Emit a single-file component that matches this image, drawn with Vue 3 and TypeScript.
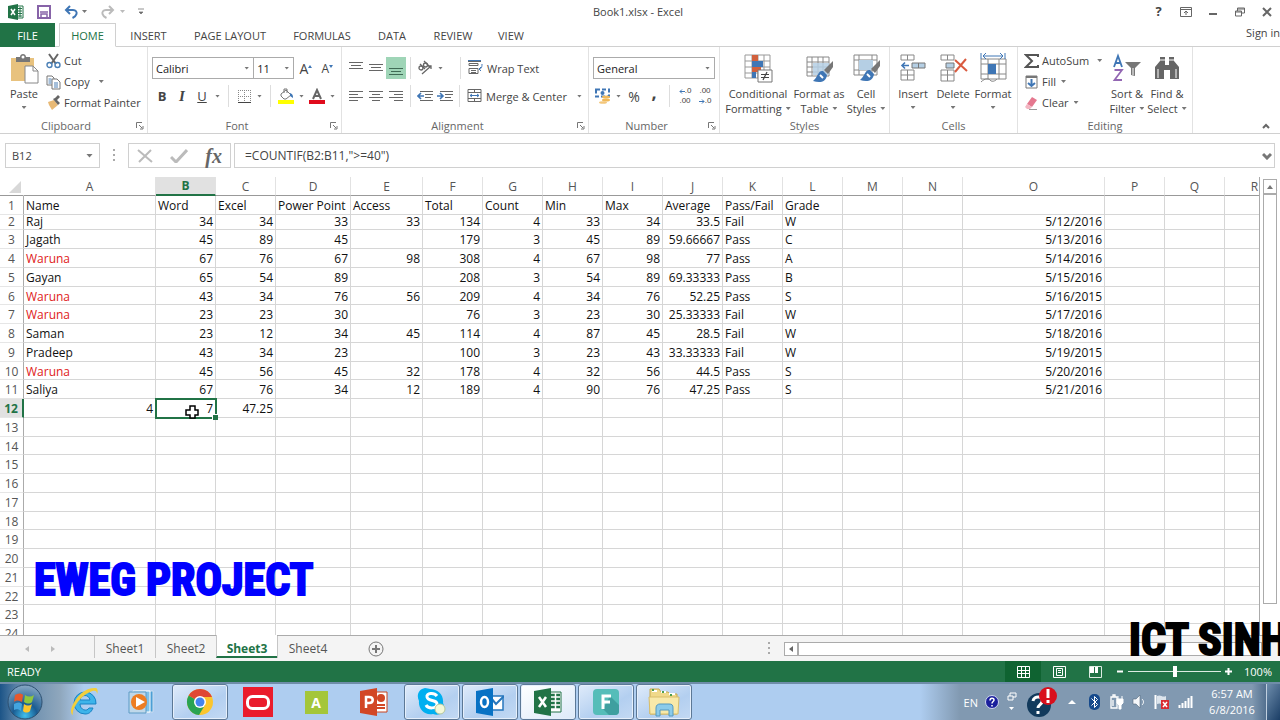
<script setup lang="ts">
import { ref } from 'vue'

type Row = string[]

const columns: string[] = 'ABCDEFGHIJKLMNOPQR'.split('')

const data: Row[] = [
  ['Name', 'Word', 'Excel', 'Power Point', 'Access', 'Total', 'Count', 'Min', 'Max', 'Average', 'Pass/Fail', 'Grade'],
  ['Raj', '34', '34', '33', '33', '134', '4', '33', '34', '33.5', 'Fail', 'W', '', '', '5/12/2016'],
  ['Jagath', '45', '89', '45', '', '179', '3', '45', '89', '59.66667', 'Pass', 'C', '', '', '5/13/2016'],
  ['Waruna', '67', '76', '67', '98', '308', '4', '67', '98', '77', 'Pass', 'A', '', '', '5/14/2016'],
  ['Gayan', '65', '54', '89', '', '208', '3', '54', '89', '69.33333', 'Pass', 'B', '', '', '5/15/2016'],
  ['Waruna', '43', '34', '76', '56', '209', '4', '34', '76', '52.25', 'Pass', 'S', '', '', '5/16/2015'],
  ['Waruna', '23', '23', '30', '', '76', '3', '23', '30', '25.33333', 'Fail', 'W', '', '', '5/17/2016'],
  ['Saman', '23', '12', '34', '45', '114', '4', '87', '45', '28.5', 'Fail', 'W', '', '', '5/18/2016'],
  ['Pradeep', '43', '34', '23', '', '100', '3', '23', '43', '33.33333', 'Fail', 'W', '', '', '5/19/2015'],
  ['Waruna', '45', '56', '45', '32', '178', '4', '32', '56', '44.5', 'Pass', 'S', '', '', '5/20/2016'],
  ['Saliya', '67', '76', '34', '12', '189', '4', '90', '76', '47.25', 'Pass', 'S', '', '', '5/21/2016'],
  ['4', '7', '47.25'],
]

const rows: Row[] = Array.from({ length: 24 }, (_, r) =>
  columns.map((_, c) => data[r]?.[c] ?? ''),
)

const isNumeric = (v: string): boolean => /^[\d./]+$/.test(v)

const ribbonTabs: string[] = ['INSERT', 'PAGE LAYOUT', 'FORMULAS', 'DATA', 'REVIEW', 'VIEW']
const sheets: string[] = ['Sheet1', 'Sheet2', 'Sheet3', 'Sheet4']
const activeSheet = ref('Sheet3')
const formula = ref('=COUNTIF(B2:B11,">=40")')
const cellName = ref('B12')
const zoom = ref(50)
</script>

<template>
  <div class="app">
    <header class="titlebar">
      <div class="quick">
        <svg width="16" height="16" viewBox="0 0 16 16"><path d="M9 2h6v12H9z" fill="#fff" stroke="#217346" /><path d="M10 4.500h4M10 7h4M10 9.500h4M10 12h4M12 3v10" stroke="#217346" /><path d="M0 2 10 0v16L0 14z" fill="#217346" /><path d="m3 5 4 6M7 5l-4 6" stroke="#fff" stroke-width="1.500" /></svg>
        <button aria-label="Save"><svg width="14" height="14" viewBox="0 0 14 14"><path d="M1 1h12v12H1z" fill="#fff" stroke="#8763a8" stroke-width="2" /><path d="M3 7h8M4 13V9h6v4" fill="none" stroke="#8763a8" stroke-width="1.500" /></svg></button>
        <button aria-label="Undo"><svg width="24" height="14" viewBox="0 0 24 14"><path d="M2 5h7c3 0 4 2 3.500 4-.5 2-2 3-4 4M6 1 2 5l4 4" fill="none" stroke="#3f76b5" stroke-width="2" /><path d="M18 5h5l-2.500 3z" fill="#777" /></svg></button>
        <button aria-label="Redo"><svg width="24" height="14" viewBox="0 0 24 14"><path d="M12 5H5C2 5 1 7 1.500 9c.5 2 2 3 4 4M8 1l4 4-4 4" fill="none" stroke="#bbb" stroke-width="2" /><path d="M19 5h5l-2.500 3z" fill="#bbb" /></svg></button>
        <button aria-label="Customize toolbar"><svg width="6" height="8" viewBox="0 0 6 8"><path d="M0 1h6M1 4h4L3 6z" fill="#666" stroke="#777" stroke-width=".8" /></svg></button>
      </div>
      <h1>Book1.xlsx - Excel</h1>
      <div class="window-buttons">
        <button class="help" aria-label="Help">?</button>
        <button aria-label="Ribbon options"><svg width="12" height="10" viewBox="0 0 12 10"><path d="M.5.500h11v9H.5zM.5 2.500h11M6 8V4M4 6l2-2 2 2" fill="none" stroke="#666" /></svg></button>
        <button aria-label="Minimize"><svg width="10" height="10" viewBox="0 0 10 10"><path d="M1 7h8" stroke="#666" stroke-width="2" /></svg></button>
        <button aria-label="Restore"><svg width="10" height="10" viewBox="0 0 10 10"><path d="M.5 4h6v5h-6zM2.500 4V1h7v5h-3M2 2h7.500M.5 5h6" fill="none" stroke="#666" /></svg></button>
        <button aria-label="Close"><svg width="10" height="10" viewBox="0 0 10 10"><path d="m1 1 8 8M9 1 1 9" stroke="#666" stroke-width="2" /></svg></button>
      </div>
    </header>

    <nav class="tabs">
      <button class="file">FILE</button>
      <button class="home">HOME</button>
      <button v-for="t in ribbonTabs" :key="t">{{ t }}</button>
      <a href="#" class="signin">Sign in</a>
    </nav>

    <section class="ribbon">
      <div class="group clipboard">
        <div class="body">
          <button class="big paste">
            <svg width="30" height="36" viewBox="0 0 30 36"><path d="M2 8h23v23H2z" fill="#e8c27e" /><path d="M7 7h4c0-4 6-4 6 0h4v5H7z" fill="#777" /><circle cx="14" cy="7" r="1.500" fill="#fff" /><path d="M16 16h8l5 5v12H16z" fill="#fff" stroke="#888" /><path d="M24 16v5h5" fill="none" stroke="#888" /></svg>
            <span>Paste</span><i class="caret" />
          </button>
          <div class="stack">
            <button><svg width="16" height="16" viewBox="0 0 16 16"><path d="m3 1 7 10M12 1 5 11" stroke="#666" stroke-width="2" /><circle cx="3.500" cy="12" r="2.500" fill="none" stroke="#4a7fb5" stroke-width="1.400" /><circle cx="11.500" cy="12" r="2.500" fill="none" stroke="#4a7fb5" stroke-width="1.400" /></svg>Cut</button>
            <button><svg width="16" height="16" viewBox="0 0 16 16"><path d="M1 2h5l2 2v7H1z" fill="#fff" stroke="#777" /><path d="M6 5h5l3 3v7H6z" fill="#fff" stroke="#777" /><path d="M2.500 5h3M2.500 7h3M2.500 9h3M8 9h4M8 11h4M8 13h4" stroke="#4a7fb5" /></svg>Copy<i class="caret far" /></button>
            <button><svg width="16" height="16" viewBox="0 0 16 16"><path d="M8 5 2 7l1 3 3 5 6-5z" fill="#e8b975" /><path d="m7 4 5 6 2-2-3-3 3-3-2-2-3 3z" fill="#666" /></svg>Format Painter</button>
          </div>
        </div>
        <footer>Clipboard<svg class="launch" width="8" height="8" viewBox="0 0 8 8"><path d="M.5 6V.5H6M3 3l3 3M7 4v3H4" fill="none" stroke="#777" /></svg></footer>
      </div>

      <div class="group font">
        <div class="lines">
          <div class="line">
            <label class="combo family"><select aria-label="Font"><option>Calibri</option></select><i class="caret" /></label>
            <label class="combo size"><select aria-label="Font size"><option>11</option></select><i class="caret" /></label>
            <button class="grow" aria-label="Increase font size">A<svg width="4" height="4" viewBox="0 0 4 4"><path d="m0 3 2-3 2 3z" fill="#3f76b5" /></svg></button>
            <button class="shrink" aria-label="Decrease font size">A<svg width="4" height="4" viewBox="0 0 4 4"><path d="m0 0 2 3 2-3z" fill="#3f76b5" /></svg></button>
          </div>
          <div class="line">
            <button class="ic glyph"><b>B</b></button>
            <button class="ic glyph serif"><em>I</em></button>
            <button class="ic glyph"><u>U</u></button>
            <button class="drop" aria-label="Underline options"><i class="caret" /></button>
            <span class="sep" />
            <button class="ic" aria-label="Borders"><svg width="13" height="13" viewBox="0 0 13 13"><path d="M.5 0v12M6.500 0v12M12.500 0v12M0 .500h13M0 6.500h13" stroke="#888" stroke-dasharray="1 1" /><path d="M0 12.500h13" stroke="#444" /></svg></button>
            <button class="drop" aria-label="Border options"><i class="caret" /></button>
            <span class="sep" />
            <button class="ic" aria-label="Fill color"><svg width="16" height="16" viewBox="0 0 16 16"><path d="m3 6 5-4 5 5-5 4H6L3 8z" fill="#fff" stroke="#777" /><path d="M6 5V1h3v4" fill="none" stroke="#777" /><path d="M12 5c3 1 3 3 3 5l-3-2z" fill="#3f76b5" /><path d="M0 12h16v4H0z" fill="#ff0" /></svg></button>
            <button class="drop" aria-label="Fill options"><i class="caret" /></button>
            <button class="ic" aria-label="Font color"><svg width="16" height="16" viewBox="0 0 16 16"><path d="m4 11 4-9 4 9M5.500 8h5" fill="none" stroke="#666" stroke-width="2" /><path d="M0 12h16v4H0z" fill="#e00b1c" /></svg></button>
            <button class="drop" aria-label="Font color options"><i class="caret" /></button>
          </div>
        </div>
        <footer>Font<svg class="launch" width="8" height="8" viewBox="0 0 8 8"><path d="M.5 6V.5H6M3 3l3 3M7 4v3H4" fill="none" stroke="#777" /></svg></footer>
      </div>

      <div class="group alignment">
        <div class="lines">
          <div class="line">
            <button class="ic" aria-label="Top align"><svg width="14" height="16" viewBox="0 0 14 16"><path d="M0 2.500h14M2 5.500h10M0 8.500h14" stroke="#666" /></svg></button>
            <button class="ic" aria-label="Middle align"><svg width="14" height="16" viewBox="0 0 14 16"><path d="M0 4.500h14M2 7.500h10M0 10.500h14" stroke="#666" /></svg></button>
            <button class="ic on" aria-label="Bottom align"><svg width="14" height="16" viewBox="0 0 14 16"><path d="M0 8.500h14M2 11.500h10M0 14.500h14" stroke="#3f6b55" /></svg></button>
            <span class="sep tight" />
            <button class="ic" aria-label="Orientation"><svg width="16" height="16" viewBox="0 0 16 16"><circle cx="4" cy="8" r="2" fill="none" stroke="#666" stroke-width="1.300" /><path d="m3 4 5 5M7 1l5 5M5 14l9-8M11 6h3v3" fill="none" stroke="#666" stroke-width="1.300" /><circle cx="8.500" cy="5" r="2" fill="none" stroke="#666" stroke-width="1.300" /></svg></button>
            <button class="drop" aria-label="Orientation options"><i class="caret" /></button>
            <span class="space" />
            <span class="sep tight" />
            <button class="wide"><svg width="16" height="16" viewBox="0 0 16 16"><path d="M0 1.500h13M1 3.500h9v2H1zM1 8.500h9v5H1zM3 10.500h5M3 12.500h5" fill="none" stroke="#666" /><path d="M0 .500h13M14 4c0 4-1 5-3 5M13 7l-2 2 2 2" fill="none" stroke="#3f76b5" /></svg>Wrap Text</button>
          </div>
          <div class="line">
            <button class="ic" aria-label="Align left"><svg width="14" height="11" viewBox="0 0 14 11"><path d="M0 .500h14M0 3.500h9M0 6.500h14M0 9.500h9" stroke="#666" /></svg></button>
            <button class="ic" aria-label="Center"><svg width="14" height="11" viewBox="0 0 14 11"><path d="M0 .500h14M3 3.500h8M0 6.500h14M3 9.500h8" stroke="#666" /></svg></button>
            <button class="ic" aria-label="Align right"><svg width="14" height="11" viewBox="0 0 14 11"><path d="M0 .500h14M5 3.500h9M0 6.500h14M5 9.500h9" stroke="#666" /></svg></button>
            <span class="sep tight" />
            <button class="ic" aria-label="Decrease indent"><svg width="16" height="11" viewBox="0 0 16 11"><path d="M3 .500h13M8 3.500h8M8 6.500h6M3 9.500h13" stroke="#666" /><path d="M1 5h6M4 2 1 5l3 3" fill="none" stroke="#3f76b5" stroke-width="1.600" /></svg></button>
            <button class="ic" aria-label="Increase indent"><svg width="16" height="11" viewBox="0 0 16 11"><path d="M3 .500h13M8 3.500h8M8 6.500h6M3 9.500h13" stroke="#666" /><path d="M0 5h6M3 2l3 3-3 3" fill="none" stroke="#3f76b5" stroke-width="1.600" /></svg></button>
            <span class="sep tight" />
            <button class="wide"><svg width="16" height="16" viewBox="0 0 16 16"><path d="M1 1.500h13v12H1zM1 4.500h13M1 10.500h13M7.500 1v3M7.500 11v3" fill="none" stroke="#666" /><path d="M3 7.500h9M5 6 3 7.500 5 9M10 6l2 1.500L10 9" fill="none" stroke="#3f76b5" /></svg>Merge &amp; Center<i class="caret mid" /></button>
          </div>
        </div>
        <footer>Alignment<svg class="launch" width="8" height="8" viewBox="0 0 8 8"><path d="M.5 6V.5H6M3 3l3 3M7 4v3H4" fill="none" stroke="#777" /></svg></footer>
      </div>

      <div class="group number">
        <div class="lines">
          <div class="line">
            <label class="combo format"><select aria-label="Number format"><option>General</option></select><i class="caret" /></label>
          </div>
          <div class="line">
            <button class="ic" aria-label="Accounting format"><svg width="16" height="16" viewBox="0 0 16 16"><path d="M1 1.500h13v7H1z" fill="#fff" stroke="#3f76b5" stroke-width="2" stroke-dasharray="4 2" /><circle cx="7.500" cy="5" r="2" fill="#3f76b5" /><ellipse cx="11" cy="9" rx="4" ry="1.500" fill="#f0b95a" /><ellipse cx="11" cy="12" rx="4" ry="1.500" fill="#f0b95a" /><ellipse cx="8" cy="14.500" rx="4" ry="1.300" fill="#f3c77c" /></svg></button>
            <button class="drop" aria-label="Accounting options"><i class="caret" /></button>
            <button class="ic glyph pct">%</button>
            <button class="ic glyph comma"><b>,</b></button>
            <span class="sep" />
            <button class="ic dec" aria-label="Increase decimal"><span><svg width="6" height="5" viewBox="0 0 6 5"><path d="M6 2.500H1M3 .500l-2 2 2 2" fill="none" stroke="#3f76b5" /></svg>.0</span><span>.00</span></button>
            <button class="ic dec" aria-label="Decrease decimal"><span>.00</span><span><svg width="6" height="5" viewBox="0 0 6 5"><path d="M0 2.500h5M3 .500l2 2-2 2" fill="none" stroke="#3f76b5" /></svg>.0</span></button>
          </div>
        </div>
        <footer>Number<svg class="launch" width="8" height="8" viewBox="0 0 8 8"><path d="M.5 6V.5H6M3 3l3 3M7 4v3H4" fill="none" stroke="#777" /></svg></footer>
      </div>

      <div class="group styles">
        <div class="body">
          <button class="big w66">
            <svg width="30" height="36" viewBox="0 0 30 36"><path d="M2 5h25v23H2zM2 11h25M2 17h25M2 23h25M9 5v23M15 5v23M21 5v23" fill="#fff" stroke="#999" /><path d="M9 5h6v6H9zM9 17h9v5H9z" fill="#d1603d" /><path d="M9 11h11v6H9zM9 22h4v6H9z" fill="#3f76b5" /><path d="M15 20h14v12H15z" fill="#fff" stroke="#777" /><path d="M18 24.500h8M18 27.500h8M24 22l-4 8" stroke="#444" stroke-width="1.200" /></svg>
            <span>Conditional</span><span>Formatting<i class="caret" /></span>
          </button>
          <button class="big w54">
            <svg width="30" height="36" viewBox="0 0 30 36"><path d="M3 7h22v19H3zM3 12h22M3 17h22M3 22h22M8 7v19M14 7v19M19 7v19" fill="#fff" stroke="#888" /><path d="M9 13h16v12H9z" fill="#b5cfe4" opacity=".85" /><path d="m29 11-9 9 4 4 5-7z" fill="#777" /><path d="M19 21c-5-1-5 6-10 10 6 2 13 2 14-6z" fill="#3f76b5" /><path d="m16 25 3 3" stroke="#fff" stroke-width="2" /></svg>
            <span>Format as</span><span>Table<i class="caret" /></span>
          </button>
          <button class="big w40">
            <svg width="30" height="36" viewBox="0 0 30 36"><path d="M3 5h23v20H3zM3 10h23M3 20h23M8 5v20M21 5v20" fill="#fff" stroke="#888" /><path d="M8 10h14v10H8z" fill="#b5cfe4" /><path d="m29 10-9 9 4 4 5-7z" fill="#777" /><path d="M19 20c-5-1-5 6-10 10 6 2 13 2 14-6z" fill="#3f76b5" /><path d="m16 24 3 3" stroke="#fff" stroke-width="2" /></svg>
            <span>Cell</span><span>Styles<i class="caret" /></span>
          </button>
        </div>
        <footer>Styles</footer>
      </div>

      <div class="group cells">
        <div class="body">
          <button class="big w40">
            <svg width="30" height="36" viewBox="0 0 30 36"><path d="M3 5h13v5H3zM9.500 5v5M3 20h13v10H3zM3 25h13M9.500 20v10" fill="#fff" stroke="#888" /><path d="M14 13h13v5H14z" fill="#b5cfe4" stroke="#777" /><path d="M20.500 13v5" stroke="#777" /><path d="M4 15.500h7M7 12.500l-3 3 3 3" fill="none" stroke="#3f76b5" stroke-width="1.600" /></svg>
            <span>Insert</span><i class="caret" />
          </button>
          <button class="big w40">
            <svg width="30" height="36" viewBox="0 0 30 36"><path d="M3 5h13v5H3zM9.500 5v5M3 20h13v11H3zM3 25h13M9.500 20v11" fill="#fff" stroke="#888" /><path d="M8 13h8v5H8z" fill="#b5cfe4" stroke="#777" /><path d="m17 10 12 11M28 9 17 22" stroke="#d95a3f" stroke-width="2" /></svg>
            <span>Delete</span><i class="caret" />
          </button>
          <button class="big w40">
            <svg width="30" height="36" viewBox="0 0 30 36"><path d="M3 9h25v20H3zM3 14h25M3 24h25M10 9v20M21 9v20" fill="#fff" stroke="#888" /><path d="M10 14h8v10h-8z" fill="#3f76b5" /><path d="M3 3v6M27 3v6M5 6h20M8 3 5 6l3 3M22 3l3 3-3 3" fill="none" stroke="#3f76b5" /><path d="M3 32c4-4 8-4 10-1 3 1 5-1 6-2" fill="none" stroke="#888" /></svg>
            <span>Format</span><i class="caret" />
          </button>
        </div>
        <footer>Cells</footer>
      </div>

      <div class="group editing">
        <div class="body">
          <div class="stack">
            <button><svg width="16" height="16" viewBox="0 0 16 16"><path d="M14 4V2H2l6 6-6 6h12v-2" fill="none" stroke="#555" stroke-width="2" /></svg>AutoSum<i class="caret mid" /></button>
            <button><svg width="16" height="16" viewBox="0 0 16 16"><path d="M2 2h11v12H2z" fill="#fff" stroke="#777" /><path d="M2 2h11v2H2z" fill="#777" /><path d="M7.500 5v7M4 9l3.500 3L11 9" fill="none" stroke="#3f76b5" stroke-width="2" /></svg>Fill<i class="caret" /></button>
            <button><svg width="16" height="16" viewBox="0 0 16 16"><path d="m8 2 5 3-5 7-5-3z" fill="#e5788f" /><path d="m3 9 5 3-2 2H3l-2-2z" fill="#f3b7c3" /><path d="M5 14.500h8" stroke="#999" /></svg>Clear<i class="caret" /></button>
          </div>
          <button class="big w40">
            <svg width="30" height="36" viewBox="0 0 30 36"><path d="m2 17 4-11 4 11M3.500 13h5" fill="none" stroke="#3f76b5" stroke-width="1.800" /><path d="M2.500 20H10l-7.500 10H10" fill="none" stroke="#9367b3" stroke-width="1.800" /><path d="M13 12h16l-6 6v8l-4-1v-7z" fill="#777" /><path d="M21 18v7" stroke="#fff" /></svg>
            <span>Sort &amp;</span><span>Filter<i class="caret" /></span>
          </button>
          <button class="big w40">
            <svg width="30" height="36" viewBox="0 0 30 36"><path d="M3 29V17l5-6V7h5v8h4V7h5v4l5 6v12h-9v-9h-6v9z" fill="#666" /><path d="M6 19v9M24 19v9M8 10h5M17 10h5" stroke="#fff" /></svg>
            <span>Find &amp;</span><span>Select<i class="caret" /></span>
          </button>
        </div>
        <footer>Editing</footer>
      </div>
      <button class="collapse" aria-label="Collapse ribbon"><svg width="8" height="6" viewBox="0 0 8 6"><path d="m1 5 3-3 3 3" fill="none" stroke="#666" stroke-width="2" /></svg></button>
    </section>

    <section class="formula-bar">
      <div class="namebox"><input v-model="cellName" aria-label="Name box"><i class="caret" /></div>
      <span class="dots" />
      <div class="fx">
        <button aria-label="Cancel"><svg width="16" height="14" viewBox="0 0 16 14"><path d="m1 1 14 12M14 1 2 13" stroke="#bbb" stroke-width="2" /></svg></button>
        <button aria-label="Enter"><svg width="18" height="14" viewBox="0 0 18 14"><path d="m1 8 5 5L17 1" fill="none" stroke="#bbb" stroke-width="3" /></svg></button>
        <button class="fn" aria-label="Insert function">fx</button>
      </div>
      <div class="formula"><input v-model="formula" aria-label="Formula"><svg width="10" height="8" viewBox="0 0 10 8"><path d="m1 2 4 4 4-4" fill="none" stroke="#777" stroke-width="3" /></svg></div>
    </section>

    <main class="sheet">
      <div class="viewport">
        <table>
          <colgroup>
            <col class="c-head"><col v-for="c in columns" :key="c" :class="'c-' + c">
          </colgroup>
          <thead>
            <tr>
              <th class="corner"><svg width="12" height="12" viewBox="0 0 12 12"><path d="M12 0v12H0z" fill="#d8d8d8" /></svg></th>
              <th v-for="c in columns" :key="c" :class="{ current: c === 'B' }">{{ c }}</th>
            </tr>
          </thead>
          <tbody>
            <tr v-for="(row, r) in rows" :key="r">
              <th :class="{ current: r === 11 }">{{ r + 1 }}</th>
              <td
                v-for="(value, c) in row"
                :key="c"
                :class="{ num: isNumeric(value), red: value === 'Waruna', selected: r === 11 && c === 1 }"
              >
                {{ value }}
                <svg v-if="r === 11 && c === 1" class="cursor" width="16" height="16" viewBox="0 0 16 16"><path d="M6 2h5v4h3v5h-3v3H6v-3H2V6h4z" fill="#fff" stroke="#000" stroke-width="1.500" /></svg>
              </td>
            </tr>
          </tbody>
        </table>
      </div>
      <div class="vscroll">
        <button aria-label="Scroll up"><svg width="6" height="4" viewBox="0 0 6 4"><path d="m0 4 3-4 3 4z" fill="#777" /></svg></button>
        <div class="thumb" />
      </div>
      <p class="caption blue">EWEG PROJECT</p>
    </main>

    <div class="sheet-bar">
      <div class="arrows">
        <button aria-label="Previous sheet"><svg width="4" height="6" viewBox="0 0 4 6"><path d="M4 0v6L0 3z" fill="#bbb" /></svg></button>
        <button aria-label="Next sheet"><svg width="4" height="6" viewBox="0 0 4 6"><path d="M0 0v6l4-3z" fill="#bbb" /></svg></button>
      </div>
      <button v-for="s in sheets" :key="s" class="sheet-tab" :class="{ active: s === activeSheet }" @click="activeSheet = s">{{ s }}</button>
      <button class="add" aria-label="New sheet"><svg width="16" height="16" viewBox="0 0 16 16"><circle cx="8" cy="8" r="7" fill="none" stroke="#777" /><path d="M8 4v8M4 8h8" stroke="#777" stroke-width="2" /></svg></button>
      <div class="hscroll">
        <span class="dots" />
        <button aria-label="Scroll left"><svg width="4" height="6" viewBox="0 0 4 6"><path d="M4 0v6L0 3z" fill="#666" /></svg></button>
        <div class="hthumb" />
      </div>
      <p class="caption black">ICT SINH</p>
    </div>

    <div class="status">
      <span>READY</span>
      <div class="views">
        <button class="on" aria-label="Normal view"><svg width="13" height="12" viewBox="0 0 13 12"><path d="M.5.500h12v11H.5zM.5 4.500h12M.5 7.500h12M4.500.500v11M8.500.500v11" fill="none" stroke="#fff" /></svg></button>
        <button aria-label="Page layout view"><svg width="13" height="12" viewBox="0 0 13 12"><path d="M.5.500h12v11H.5zM3.500 2.500h6v7h-6zM5 4.500h3M5 6.500h3" fill="none" stroke="#fff" /></svg></button>
        <button aria-label="Page break view"><svg width="13" height="12" viewBox="0 0 13 12"><path d="M.5.500h12v11H.5z" fill="none" stroke="#dcebe2" /><path d="M1 1h4v6H1zM6 1h3v6H6z" fill="#fff" /></svg></button>
      </div>
      <div class="zoom">
        <button aria-label="Zoom out"><svg width="7" height="7" viewBox="0 0 7 7"><path d="M0 3.500h6" stroke="#fff" stroke-width="2" /></svg></button>
        <input v-model="zoom" type="range" min="0" max="100" aria-label="Zoom">
        <button aria-label="Zoom in"><svg width="7" height="7" viewBox="0 0 7 7"><path d="M0 3.500h7M3.500 0v7" stroke="#fff" stroke-width="2" /></svg></button>
        <span>100%</span>
      </div>
    </div>

    <footer class="taskbar">
      <button class="start" aria-label="Start">
        <svg width="36" height="36" viewBox="0 0 36 36"><defs><radialGradient id="orb" cx=".5" cy=".9" r=".9"><stop offset="0" stop-color="#3fc0ee" /><stop offset=".4" stop-color="#1a5c92" /><stop offset="1" stop-color="#8aa9c4" /></radialGradient></defs><circle cx="18" cy="18" r="17" fill="url(#orb)" stroke="#2c4f70" /><path d="M8 11c3-2 6-2 8 0l-1 7c-3-2-6-2-8 0z" fill="#e8582c" /><path d="M18 11c3 2 6 2 9 0l-2 7c-2 2-5 2-8 0z" fill="#8fc63f" /><path d="M7 20c3-2 6-2 8 0l-1 7c-2-2-5-2-7-1z" fill="#43a5df" /><path d="M17 20c3 2 5 2 8 0l-2 7c-2 2-5 2-7 0z" fill="#fbc52d" /></svg>
      </button>
      <button class="task" aria-label="Internet Explorer"><svg width="32" height="32" viewBox="0 0 32 32"><path d="M25 22c-2 5-5 6-8 6A11 11 0 1 1 28 18H12c0 6 7 8 9 4zM12 14h10c-1-6-9-6-10 0z" fill="#3db4ea" stroke="#1a83c4" /><path d="M5 29c-7-2 6-29 23-27 2 1 2 4 1 6 0-4-3-4-7-2C12 10 3 24 5 29z" fill="#f3ce3c" /></svg></button>
      <button class="task" aria-label="Media Player"><svg width="28" height="26" viewBox="0 0 28 26"><path d="M8 2h17v21H8z" fill="#4b9fd6" stroke="#cde" /><path d="M5 2h17v21H5z" fill="#7fc1e8" stroke="#fff" /><path d="M1 3h17v21H1z" fill="#bfd8ea" stroke="#5d9bc4" /><circle cx="11" cy="13" r="8" fill="#ed7d23" /><path d="m8 8 9 5-9 5z" fill="#fff" /></svg></button>
      <button class="task open" aria-label="Chrome"><svg width="28" height="28" viewBox="0 0 28 28"><circle cx="14" cy="14" r="13" fill="#fbc52d" /><path d="M14 14 2.700 7.500A13 13 0 0 0 13 27l6-10z" fill="#29a352" /><path d="M14 14 2.700 7.500A13 13 0 0 1 26 9H14z" fill="#df4735" /><circle cx="14" cy="14" r="6" fill="#fff" /><circle cx="14" cy="14" r="4.500" fill="#4484ef" /></svg></button>
      <button class="task" aria-label="Oracle"><svg width="30" height="30" viewBox="0 0 30 30"><path d="M0 0h30v30H0z" fill="#ea1c2c" /><rect x="4.500" y="9.500" width="21" height="12" rx="5" fill="none" stroke="#fff" stroke-width="3" /></svg></button>
      <button class="task" aria-label="Android tool"><span class="a-tile">A</span></button>
      <button class="task" aria-label="PowerPoint"><svg width="28" height="28" viewBox="0 0 28 28"><path d="M14 4h13v20H14z" fill="#fff" stroke="#c8421f" /><circle cx="21" cy="10" r="4" fill="#d24726" /><path d="M16 17h9M16 20h9" stroke="#d24726" stroke-width="2" /><path d="M0 3 17 0v28L0 25z" fill="#d24726" /><path d="M6 20V9h3c5 0 5 6 0 6H6" fill="none" stroke="#fff" stroke-width="2.500" /></svg></button>
      <button class="task open" aria-label="Skype"><svg width="30" height="30" viewBox="0 0 30 30"><path d="M8 1c2 0 4 1 5 1 8 0 14 6 13 14 4 8-3 14-10 11C8 29 1 22 2 14-1 8 2 2 8 1z" fill="#00aff0" /><path d="M20 9c-3-4-11-3-10 1 1 5 10 2 10 7 0 5-9 5-11 1" fill="none" stroke="#fff" stroke-width="3" /><circle cx="23" cy="22" r="5" fill="#f4f8d8" stroke="#b5c79c" /></svg></button>
      <button class="task open" aria-label="Outlook"><svg width="28" height="28" viewBox="0 0 28 28"><path d="M14 8h13v14H14z" fill="#fff" stroke="#2777bd" stroke-width="1.500" /><path d="m15 10 5 6 8-8" fill="none" stroke="#2777bd" stroke-width="2" /><path d="M0 3 17 0v28L0 25z" fill="#0872c4" /><ellipse cx="8.500" cy="14" rx="3.500" ry="5" fill="none" stroke="#fff" stroke-width="2.500" /></svg></button>
      <button class="task open active" aria-label="Excel"><svg width="28" height="28" viewBox="0 0 28 28"><path d="M14 4h13v20H14z" fill="#fff" stroke="#217346" /><path d="M17 7h9M17 11h9M17 15h9M17 19h9" stroke="#217346" stroke-width="2.500" /><path d="M21.500 5v18" stroke="#fff" stroke-width="1.500" /><path d="M0 3 17 0v28L0 25z" fill="#217346" /><path d="m5 9 7 10M12 9 5 19" stroke="#fff" stroke-width="2.500" /></svg></button>
      <button class="task open" aria-label="Format Factory"><svg width="26" height="26" viewBox="0 0 26 26"><rect width="26" height="26" rx="4" fill="#55bdb9" /><path d="m17 7 9 9v6a4 4 0 0 1-4 4H16l-6-6z" fill="#3f9f9f" /><path d="M10 20V7h8M10 13h7" fill="none" stroke="#fff" stroke-width="3" /></svg></button>
      <button class="task open" aria-label="Explorer"><svg width="32" height="30" viewBox="0 0 32 30"><path d="M2 6V2h9l2 3h7l2 2h7v20H2z" fill="#f0d98a" stroke="#c8a951" /><path d="M4 4h5M13 5h5M21 7h6" stroke="#fff" stroke-width="2" /><path d="M4 3h2M14 5h2M22 8h2" stroke="#4b9f50" stroke-width="2" /><path d="M1 10h30l-1 17H2z" fill="#f8e9a9" stroke="#d8bd6a" /><path d="M8 29v-8c0-3 2-4 4-4h9c3 0 4 1 4 4v8h-4v-6h-9v6z" fill="#8bcbea" stroke="#5499c0" /></svg></button>
      <div class="tray">
        <span class="lang">EN</span>
        <svg width="14" height="14" viewBox="0 0 14 14"><circle cx="7" cy="7" r="6.500" fill="#1a1f9c" stroke="#cfd5ef" /><path d="M5 5.500c0-3 4-3 4-.5 0 1.500-2 1.500-2 3.500M7 10v1.500" fill="none" stroke="#fff" stroke-width="1.500" /></svg>
        <svg class="lo" width="10" height="20" viewBox="0 0 10 20"><path d="M1 4h5v4H1zM3 4V1h6v4H6" fill="none" stroke="#fff" /><path d="M2 15h5l-2.500 3z" fill="#fff" /></svg>
        <svg class="alert" width="32" height="32" viewBox="0 0 32 32"><circle cx="13" cy="19" r="12" fill="#123a5c" /><path d="M7 15c1-6 11-5 9 1-1 3-4 3-4 6M12 25v3" fill="none" stroke="#fff" stroke-width="3" /><circle cx="22" cy="10" r="9" fill="#d90f1c" /><path d="M22 3v9M22 14v3" stroke="#fff" stroke-width="3" /></svg>
        <svg class="more" width="10" height="14" viewBox="0 0 10 14"><path d="m1 9 4-4 4 4z" fill="#fff" /></svg>
        <svg width="14" height="16" viewBox="0 0 14 16"><rect x="1" width="11" height="16" rx="5" fill="#164a8c" /><path d="m3.500 4.500 6 6-3 3v-11l3 3-6 6" fill="none" stroke="#fff" /></svg>
        <svg width="14" height="16" viewBox="0 0 14 16"><path d="M1 3h6v11H1zM3 3V1h2v2M3 6v6" fill="none" stroke="#fff" stroke-width="1.300" /><path d="M7 5h6v4l-2 2v4H9v-4L7 9zM8 5V2M12 5V2" fill="#fff" stroke="#fff" /></svg>
        <svg width="14" height="16" viewBox="0 0 14 16"><path d="M1 5h3l4-4v13l-4-4H1z" fill="#f5f7fa" stroke="#56697c" stroke-width=".6" /><path d="M10 5c2 2 2 4 0 6" fill="none" stroke="#fff" /></svg>
        <svg width="16" height="16" viewBox="0 0 16 16"><path d="M1.500 1v14" stroke="#fff" stroke-width="2" /><path d="M3 2c4-2 5 2 9 0v8c-4 2-5-2-9 0z" fill="#dce4ec" /><path d="M7 6h8v9H7z" fill="#d92c32" /><path d="m9 8 4 5M13 8l-4 5" stroke="#fff" stroke-width="1.500" /></svg>
        <svg width="15" height="14" viewBox="0 0 15 14"><path d="M1.500 10v3M4.500 8v5M7.500 6v7M10.500 3v10M13.500 1v12" stroke="#fff" stroke-width="2" /></svg>
        <div class="clock"><span>6:57 AM</span><span>6/8/2016</span></div>
      </div>
      <button class="desktop" aria-label="Show desktop" />
    </footer>
  </div>
</template>

<style>
body {
  margin: 0;
  overflow: hidden;
}
</style>

<style scoped>
.app {
  display: flex;
  flex-direction: column;
  height: 100vh;
  overflow: hidden;
  background: #fff;
  color: #444;
  font: 11px/15px "Open Sans", "Noto Sans", sans-serif;
}
* { box-sizing: border-box; }
button, input, select {
  margin: 0;
  padding: 0;
  border: 0;
  background: none;
  color: inherit;
  font: inherit;
  outline: 0;
}
svg { display: block; flex: none; }
.caret {
  flex: none;
  width: 5px;
  height: 3px;
  background: #777;
  clip-path: polygon(0 0, 100% 0, 50% 100%);
}

.titlebar {
  display: grid;
  grid-template-columns: 1fr auto 1fr;
  align-items: center;
  height: 23px;
  padding: 0 0 0 8px;
}
.titlebar h1 { margin: 0; padding-right: 12px; font: inherit; }
.quick { display: flex; align-items: center; gap: 13px; }
.window-buttons { display: flex; justify-content: flex-end; }
.window-buttons button { display: grid; place-items: center; width: 27px; height: 20px; }
.window-buttons .help { font-size: 13px; font-weight: 700; }

.tabs {
  display: grid;
  grid-template-columns: 55px 66px 55px 108px 76px 64px 58px 58px 1fr;
  height: 24px;
  border-bottom: 1px solid #d0d0d0;
}
.tabs button { white-space: nowrap; }
.tabs .file { background: #217346; color: #fff; }
.tabs .home {
  height: 24px;
  margin: 0 5px 0 4px;
  border: 1px solid #d0d0d0;
  border-bottom-color: #fff;
  background: #fff;
  color: #217346;
}
.signin { justify-self: end; color: inherit; text-decoration: none; line-height: 20px; }

.ribbon { display: flex; height: 87px; border-bottom: 1px solid #d0d0d0; }
.group {
  display: flex;
  flex: none;
  flex-direction: column;
  padding-top: 3px;
  border-right: 1px solid #e2e2e2;
}
.group footer {
  display: flex;
  align-items: center;
  justify-content: center;
  height: 16px;
  position: relative;
  color: #666;
}
.clipboard footer, .font footer, .alignment footer, .number footer { padding-right: 15px; }
.launch { position: absolute; right: 3px; top: 5px; }
.clipboard { width: 148px; }
.font { width: 194px; }
.alignment { width: 247px; }
.number { width: 131px; }
.styles { width: 170px; }
.cells { width: 128px; }
.editing { width: 175px; }
.body { display: flex; height: 68px; }
.big {
  display: flex;
  flex: none;
  flex-direction: column;
  align-items: center;
  white-space: nowrap;
}
.big span { display: flex; align-items: center; gap: 4px; height: 15px; }
.big > .caret { margin-top: 5px; }
.paste { width: 36px; margin-left: 6px; }
.w66 { width: 68px; }
.w54 { width: 54px; }
.w40 { width: 40px; }
.styles .body { padding-left: 4px; }
.cells .body { padding-left: 3px; }
.stack { display: flex; flex-direction: column; align-items: flex-start; }
.stack button { display: flex; align-items: center; gap: 2px; height: 21px; white-space: nowrap; }
.stack .caret { margin-left: 3px; }
.stack .caret.far { margin-left: 7px; }
.stack .caret.mid { margin-left: 6px; }
.clipboard .stack { padding-left: 4px; }
.editing .stack { width: 89px; padding-left: 6px; }

.lines { display: flex; flex-direction: column; gap: 6px; height: 68px; padding: 7px 4px 0; }
.line { display: flex; align-items: center; height: 22px; }
.line button { display: flex; align-items: center; justify-content: center; }
.line .ic { flex: none; width: 20px; height: 22px; }
.line .drop { flex: none; width: 11px; height: 22px; }
.sep { flex: none; width: 1px; height: 22px; margin: 0 5px; background: #ddd; }
.sep.tight { margin: 0 4px; }
.space { width: 10px; }
.on { background: #9fd5b7; }
.alignment .wide { gap: 3px; padding-left: 3px; white-space: nowrap; }
.caret.mid { margin-left: 7px; }
.combo {
  display: flex;
  align-items: center;
  height: 22px;
  padding: 0 4px 0 3px;
  border: 1px solid #ababab;
  color: #222;
}
.combo select { flex: 1; min-width: 0; appearance: none; }
.family { width: 105px; }
.size { width: 42px; margin-left: -1px; }
.format { width: 123px; }
.grow { width: 24px; font-size: 14px; }
.shrink { width: 20px; font-size: 12px; }
.grow svg, .shrink svg { align-self: flex-start; margin-top: 4px; }
.glyph { font-size: 13px; }
.serif { font-family: "Liberation Serif", serif; font-size: 15px; font-weight: 700; }
.pct { font-size: 14px; }
.comma { font-size: 18px; padding-bottom: 8px; }
.line .dec { flex-direction: column; font: 8px/10px "Liberation Sans", sans-serif; }
.dec span { display: flex; align-items: center; }
.collapse { align-self: flex-end; margin: 0 10px 4px auto; }

.formula-bar { display: flex; align-items: stretch; height: 43px; padding: 9px 5px; font-size: 12px; }
.namebox, .fx, .formula { display: flex; align-items: center; border: 1px solid #d0d0d0; }
.namebox { width: 95px; padding: 0 6px; }
.namebox input { flex: 1; min-width: 0; font-size: 11px; }
.namebox .caret { width: 7px; height: 4px; }
.dots { align-self: center; width: 2px; height: 13px; background: repeating-linear-gradient(#aaa 0 2px, transparent 2px 5px); }
.formula-bar .dots { margin: 0 13px; }
.fx { width: 103px; justify-content: space-between; padding: 0 8px; }
.fn { font: italic 700 20px/20px "Liberation Serif", serif; color: #666; }
.formula { flex: 1; margin-left: 3px; padding: 0 2px 0 10px; }
.formula input { flex: 1; min-width: 0; }

.sheet { position: relative; display: flex; flex: 1; min-height: 0; }
.viewport { flex: 1; min-width: 0; overflow: hidden; border-right: 1px solid #ababab; }
table {
  table-layout: fixed;
  width: 1285px;
  border-collapse: separate;
  border-spacing: 0;
  color: #111;
  font-size: 12px;
  line-height: 14px;
}
.c-head { width: 24px; }
.c-A { width: 132px; }
.c-B, .c-C, .c-F, .c-G, .c-H, .c-I, .c-J, .c-K, .c-L, .c-M, .c-N, .c-P, .c-Q, .c-R { width: 60px; }
.c-D { width: 75px; }
.c-E { width: 72px; }
.c-O { width: 142px; }
th, td { height: 19px; padding: 2px 0 0; border-right: 1px solid #d6d6d6; border-bottom: 1px solid #d6d6d6; white-space: nowrap; }
th { color: #555; font-weight: 400; text-align: center; }
tbody th { border-right-color: #ababab; border-bottom-color: #e6e6e6; }
thead th { padding-top: 1px; border-bottom-color: #999; border-right-color: #e2e2e2; }
thead .corner { border-right-color: transparent; }
.corner svg { margin-left: 9px; }
td { padding: 2px 2px 0; text-align: left; }
tbody tr:nth-child(2) th, tbody tr:nth-child(2) td { height: 15px; padding-top: 0; line-height: 12px; }
tbody tr:nth-child(4n + 6) th, tbody tr:nth-child(4n + 6) td { height: 18px; }
td.num { text-align: right; }
.red { color: #e02020; }
th.current { background: #e1e1e1; color: #217346; font-weight: 700; }
thead th.current { border-bottom: 2px solid #217346; }
tbody th.current { border-right: 2px solid #217346; }
.selected { position: relative; outline: 2px solid #217346; outline-offset: -1px; }
.selected::after {
  content: "";
  position: absolute;
  right: -3px;
  bottom: -3px;
  width: 5px;
  height: 5px;
  border: 1px solid #fff;
  border-width: 1px 0 0 1px;
  background: #217346;
}
.cursor { position: absolute; left: 28px; top: 5px; }
.vscroll { display: flex; flex-direction: column; width: 20px; padding: 2px 3px 0; background: #fff; }
.vscroll button { display: grid; place-items: center; height: 15px; border: 1px solid #ababab; }
.thumb { height: 410px; border: 1px solid #ababab; background: #fff; }
.caption {
  position: absolute;
  margin: 0;
  font: 700 44px/46px "Roboto Condensed", "Open Sans Condensed", "Noto Sans Condensed", Roboto, sans-serif;
  white-space: nowrap;
}
.blue { left: 34px; bottom: 32px; color: #00f; -webkit-text-stroke: 2px #00f; }
.black { left: calc(100% - 151px); bottom: -2px; color: #000; -webkit-text-stroke: 2px #000; }

.sheet-bar {
  position: relative;
  display: flex;
  align-items: stretch;
  height: 26px;
  border-top: 1px solid #ababab;
  background: #f4f4f4;
  font-size: 12px;
}
.arrows { display: flex; align-items: center; gap: 22px; width: 94px; padding-left: 25px; }
.sheet-tab { width: 61px; border-left: 1px solid #c6c6c6; margin-bottom: 3px; padding-top: 2px; color: #555; }
.sheet-tab.active { margin-top: -1px; padding-top: 5px; border-bottom: 2px solid #217346; background: #fff; color: #217346; font-weight: 700; }
.add { margin-left: 30px; }
.hscroll { display: flex; align-items: center; width: 40%; margin-left: auto; }
.hscroll button { display: grid; place-items: center; width: 14px; height: 14px; margin-left: 14px; border: 1px solid #ababab; background: #fff; }
.hthumb { flex: 1; height: 14px; margin-right: 18px; border: 1px solid #ababab; background: #fff; }

.status {
  display: flex;
  align-items: center;
  height: 21px;
  padding: 0 8px 0 7px;
  background: #217346;
  color: #fff;
}
.views { display: flex; margin-left: auto; }
.views button { display: grid; place-items: center; width: 36px; height: 21px; }
.views .on { background: #0f6331; }
.zoom { display: flex; align-items: center; margin-left: 4px; gap: 4px; }
.zoom span { width: 30px; margin-left: 6px; text-align: right; }
.zoom input { width: 93px; height: 14px; appearance: none; background: linear-gradient(#dcebe2, #dcebe2) center / 100% 1px no-repeat; }
.zoom input::-webkit-slider-thumb { appearance: none; width: 4px; height: 11px; background: #fff; }

.taskbar {
  display: flex;
  align-items: stretch;
  height: 38px;
  border-top: 2px solid #6f8da9;
  background: linear-gradient(90deg, #1c5487 0, #5f86a9 18px, #8fa7bd 60px, #aecdf0 84px, #aecdf0 calc(100% - 360px), #8199b1 calc(100% - 320px), #8199b1 calc(100% - 28px), #25476d 100%);
}
.start { width: 56px; padding-left: 7px; }
.task { display: grid; place-items: center; width: 56px; margin-right: 2px; border-radius: 3px; }
.task.open { border: 1px solid #5c7896; background: linear-gradient(150deg, #dfebfa, #b3cff0 60%, #c3d9f3); box-shadow: inset 0 0 0 1px #e5effb; }
.task.active { background: linear-gradient(150deg, #fff, #dce9f8); }
.a-tile { width: 23px; height: 23px; background: #a4c63a; color: #fff; font: 700 14px/24px "Open Sans", sans-serif; text-align: center; }
.tray { display: flex; align-items: center; gap: 8px; margin-left: auto; color: #fff; }
.lang { margin-right: -1px; }
.clock { display: flex; flex-direction: column; width: 56px; margin-left: 3px; line-height: 16px; text-align: center; }
.alert { margin: 0 1px; }
.more { margin-right: 3px; }
.desktop { width: 14px; margin-left: 6px; border-left: 1px solid #c0cfdf; background: linear-gradient(120deg, #6d8cab, #1b3e66); }
</style>
